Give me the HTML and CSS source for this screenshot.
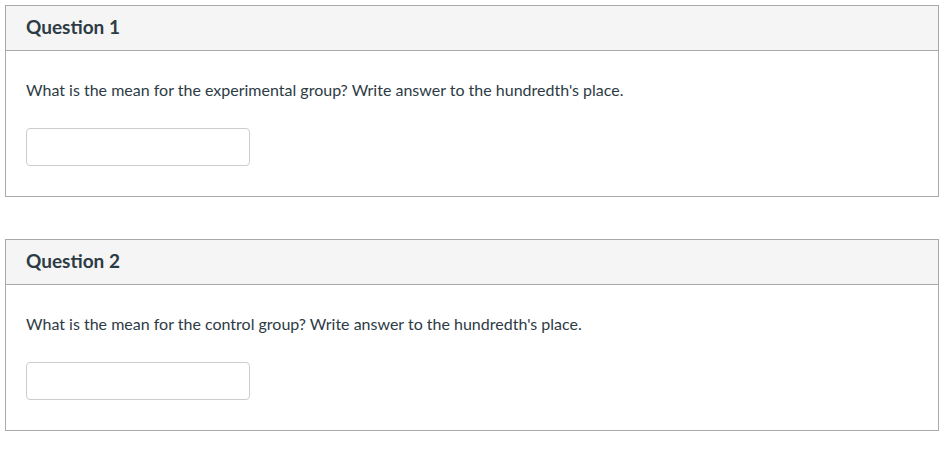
FILE: index.html
```html
<!DOCTYPE html>
<html>
<head>
<meta charset="utf-8">
<link rel="stylesheet" href="styles.css">
</head>
<body>
<div class="quiz">
  <div class="question">
    <div class="q-header">Question 1</div>
    <div class="q-body">
      <p class="q-text">What is the mean for the experimental group? Write answer to the hundredth's place.</p>
      <input class="q-input" type="text">
    </div>
  </div>
  <div class="question">
    <div class="q-header">Question 2</div>
    <div class="q-body">
      <p class="q-text">What is the mean for the control group? Write answer to the hundredth's place.</p>
      <input class="q-input" type="text">
    </div>
  </div>
</div>
</body>
</html>
```
FILE: styles.css
```css
html, body {
  margin: 0;
  padding: 0;
  background: #ffffff;
}
body {
  font-family: Lato, "Liberation Sans", sans-serif;
  color: #2d3b45;
}
.quiz {
  display: flex;
  flex-direction: column;
  gap: 42px;
  padding: 5px 8px 5px 5px;
}
.question {
  border: 1px solid #aaaaaa;
  background: #ffffff;
}
.q-header {
  background: #f5f5f5;
  border-bottom: 1px solid #aaaaaa;
  height: 44px;
  line-height: 42px;
  padding: 0 20px;
  font-size: 19px;
  font-weight: bold;
}
.q-body {
  padding: 29px 20px 30px 20px;
}
.q-text {
  margin: 0 0 28px 0;
  font-size: 16px;
  line-height: 20px;
}
.q-input {
  display: block;
  box-sizing: border-box;
  width: 224px;
  height: 38px;
  margin: 0;
  border: 1px solid #cccccc;
  border-radius: 4px;
  background: #ffffff;
}
```
